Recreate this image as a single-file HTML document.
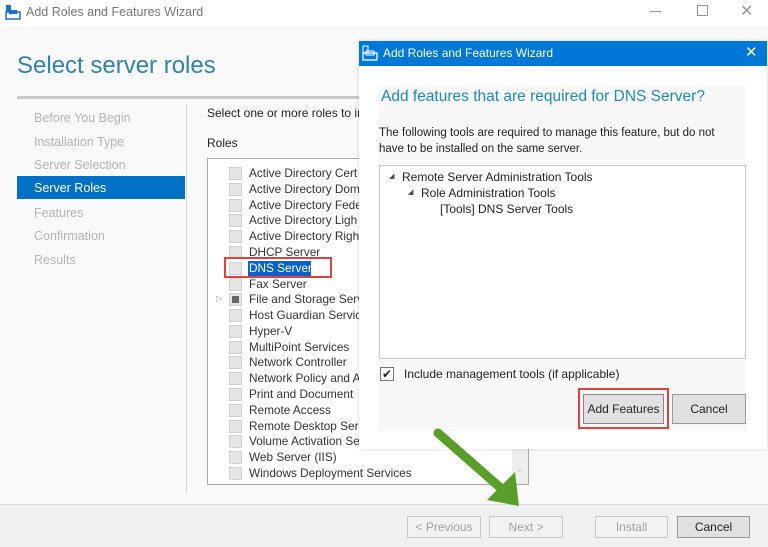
<!DOCTYPE html><html><head><style>
*{margin:0;padding:0;box-sizing:border-box}
body{width:768px;height:547px;overflow:hidden;background:#fff;font-family:"Liberation Sans",sans-serif;font-size:12px;color:#222;position:relative}
.a{position:absolute;white-space:nowrap}
.nav{color:#b5b5b5;font-size:12.5px;left:34px}
.cb{position:absolute;left:229px;width:13px;height:13px;background:#e6e6e6;border:1px solid #d0d0d0}
.it{position:absolute;left:249px;font-size:11.8px;color:#333}
.btn{position:absolute;height:22px;border:1px solid #c8c8c8;background:#f2f2f2;color:#a0a0a0;text-align:center;line-height:20px;font-size:12px}
</style></head><body>
<div class="a" style="left:0;top:26px;width:768px;height:478px;background:#f9f9f9"></div>
<svg class="a" style="left:5px;top:4px" width="16" height="16"><rect x="1" y="1" width="5" height="7" fill="#1a73c8"/><rect x="1" y="8" width="14" height="7" fill="none" stroke="#1a73c8" stroke-width="1.5"/><rect x="4" y="6" width="8" height="4" fill="#1a73c8"/></svg>
<div class="a" style="left:26px;top:5px;font-size:12.5px;color:#777">Add Roles and Features Wizard</div>
<div class="a" style="left:650px;top:11px;width:11px;height:1px;background:#999"></div>
<div class="a" style="left:697px;top:5px;width:11px;height:11px;border:1px solid #999"></div>
<div class="a" style="left:740px;top:1px;font-size:16px;color:#999">✕</div>
<div class="a" style="left:17px;top:52px;font-size:24px;color:#3182ad">Select server roles</div>
<div class="a" style="left:17px;top:96px;width:345px;height:3px;background:#c9c9c9"></div>
<div class="a nav" style="top:111px">Before You Begin</div>
<div class="a nav" style="top:135px">Installation Type</div>
<div class="a nav" style="top:158px">Server Selection</div>
<div class="a" style="left:17px;top:176px;width:168px;height:23px;background:#0071c5"></div>
<div class="a" style="left:34px;top:181px;color:#fff;font-size:12.5px">Server Roles</div>
<div class="a nav" style="top:206px">Features</div>
<div class="a nav" style="top:229px">Confirmation</div>
<div class="a nav" style="top:253px">Results</div>
<div class="a" style="left:186px;top:104px;width:1px;height:388px;background:#d6d6d6"></div>
<div class="a" style="left:207px;top:106px;font-size:12px">Select one or more roles to in</div>
<div class="a" style="left:207px;top:136px;font-size:12px;color:#222">Roles</div>
<div class="a" style="left:207px;top:158px;width:322px;height:327px;background:#fff;border:1px solid #aaa"></div>
<div class="a" style="left:512px;top:447px;width:16px;height:37px;background:#eee"></div>
<div class="a" style="left:516px;top:464px;color:#bbb;font-size:9px">⌄</div>
<div class="cb" style="top:167px"></div><div class="it" style="top:166px">Active Directory Cert</div>
<div class="cb" style="top:183px"></div><div class="it" style="top:182px">Active Directory Dom</div>
<div class="cb" style="top:199px"></div><div class="it" style="top:198px">Active Directory Fede</div>
<div class="cb" style="top:214px"></div><div class="it" style="top:213px">Active Directory Ligh</div>
<div class="cb" style="top:230px"></div><div class="it" style="top:229px">Active Directory Righ</div>
<div class="cb" style="top:246px"></div><div class="it" style="top:245px">DHCP Server</div>
<div class="cb" style="top:262px"></div><div class="a" style="left:248px;top:261px;width:63px;height:15px;background:#0a64c8"></div><div class="it" style="top:261px;color:#fff">DNS Server</div>
<div class="a" style="left:224px;top:257px;width:108px;height:21px;border:2px solid #e04040"></div>
<div class="cb" style="top:278px"></div><div class="it" style="top:277px">Fax Server</div>
<div class="a" style="left:216px;top:294px;color:#999;font-size:8px">▷</div>
<div class="cb" style="top:293px"></div><div class="a" style="left:232px;top:296px;width:7px;height:7px;background:#666"></div><div class="it" style="top:292px">File and Storage Serv</div>
<div class="cb" style="top:309px"></div><div class="it" style="top:308px">Host Guardian Servic</div>
<div class="cb" style="top:325px"></div><div class="it" style="top:324px">Hyper-V</div>
<div class="cb" style="top:341px"></div><div class="it" style="top:340px">MultiPoint Services</div>
<div class="cb" style="top:356px"></div><div class="it" style="top:355px">Network Controller</div>
<div class="cb" style="top:372px"></div><div class="it" style="top:371px">Network Policy and A</div>
<div class="cb" style="top:388px"></div><div class="it" style="top:387px">Print and Document</div>
<div class="cb" style="top:404px"></div><div class="it" style="top:403px">Remote Access</div>
<div class="cb" style="top:420px"></div><div class="it" style="top:419px">Remote Desktop Ser</div>
<div class="cb" style="top:435px"></div><div class="it" style="top:434px">Volume Activation Se</div>
<div class="cb" style="top:451px"></div><div class="it" style="top:450px">Web Server (IIS)</div>
<div class="cb" style="top:467px"></div><div class="it" style="top:466px">Windows Deployment Services</div>
<div class="a" style="left:0;top:504px;width:768px;height:43px;background:#f0f0f0;border-top:1px solid #ddd"></div>
<div class="btn" style="left:407px;top:516px;width:74px">&lt; Previous</div>
<div class="btn" style="left:489px;top:516px;width:74px">Next &gt;</div>
<div class="btn" style="left:595px;top:516px;width:73px">Install</div>
<div class="btn" style="left:677px;top:516px;width:73px;background:#e1e1e1;border-color:#999;color:#222">Cancel</div>
<div class="a" style="left:359px;top:41px;width:408px;height:408px;background:#fff;box-shadow:0 0 4px rgba(0,0,0,.15)"></div>
<div class="a" style="left:359px;top:41px;width:408px;height:25px;background:#0078d7"></div>
<svg class="a" style="left:362px;top:45px" width="16" height="16"><rect x="1" y="1" width="5" height="7" fill="none" stroke="#fff"/><rect x="1" y="8" width="14" height="7" fill="none" stroke="#fff" stroke-width="1.3"/><rect x="4" y="6" width="8" height="4" fill="none" stroke="#fff"/></svg>
<div class="a" style="left:383px;top:46px;color:#fff;font-size:12px">Add Roles and Features Wizard</div>
<div class="a" style="left:745px;top:43px;color:#fff;font-size:15px">✕</div>
<div class="a" style="left:378px;top:86px;width:368px;height:345px;background:#f8f8f8"></div>
<div class="a" style="left:381px;top:88px;font-size:15.5px;color:#1d8bb8">Add features that are required for DNS Server?</div>
<div class="a" style="left:379px;top:125px;font-size:11.5px;line-height:16px;color:#222">The following tools are required to manage this feature, but do not<br>have to be installed on the same server.</div>
<div class="a" style="left:379px;top:165px;width:367px;height:194px;background:#fff;border:1px solid #c8c8c8"></div>
<div class="a" style="left:389px;top:172px;font-size:7px;color:#444">◢</div>
<div class="a" style="left:402px;top:170px;font-size:12px">Remote Server Administration Tools</div>
<div class="a" style="left:408px;top:188px;font-size:7px;color:#444">◢</div>
<div class="a" style="left:421px;top:186px;font-size:12px">Role Administration Tools</div>
<div class="a" style="left:440px;top:202px;font-size:12px">[Tools] DNS Server Tools</div>
<div class="a" style="left:380px;top:367px;width:14px;height:14px;border:1px solid #777;background:#fff;font-size:12px;line-height:12px;text-align:center">✔</div>
<div class="a" style="left:404px;top:367px;font-size:12px">Include management tools (if applicable)</div>
<div class="a" style="left:578px;top:388px;width:91px;height:41px;border:2px solid #e04040"></div>
<div class="btn" style="left:583px;top:394px;width:81px;height:30px;line-height:28px;background:#e1e1e1;border-color:#888;color:#222">Add Features</div>
<div class="btn" style="left:672px;top:394px;width:74px;height:30px;line-height:28px;background:#e1e1e1;border-color:#999;color:#222">Cancel</div>
<svg class="a" style="left:425px;top:420px" width="110" height="95"><line x1="13" y1="13" x2="78" y2="70" stroke="#5a9e2a" stroke-width="9" stroke-linecap="round"/><polygon points="62,80 94,86 90,52" fill="#5a9e2a"/></svg>
</body></html>
